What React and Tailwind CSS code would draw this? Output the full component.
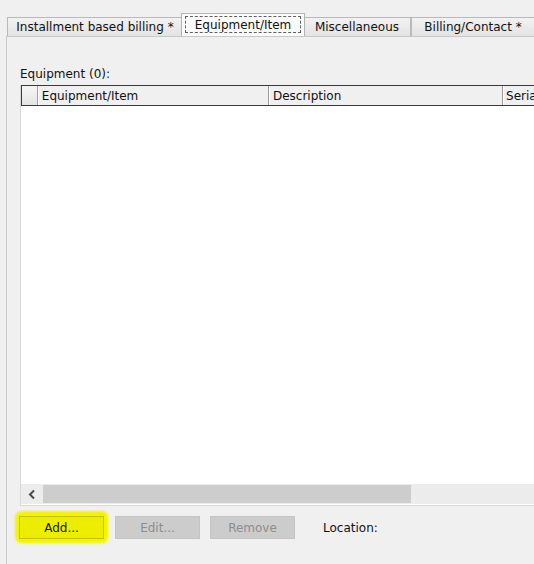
import React from 'react';

const font = { fontFamily: '"DejaVu Sans", "Liberation Sans", sans-serif' };

const tabs = [
  { label: 'Installment based billing *', w: 'w-[176px]' },
  { label: 'Equipment/Item', w: 'w-[124px]', active: true },
  { label: 'Miscellaneous', w: 'w-[108px]' },
  { label: 'Billing/Contact *', w: 'w-[124px]' },
];

const Tab = ({ label, w, active }) => {
  if (active) {
    return (
      <div className={`${w} h-[23px] -mx-[2px] relative z-10 bg-[#fbfbfb] border border-b-0 border-[#b3b3b3] flex items-start justify-center pt-[2px] px-[3px] shrink-0`}>
        <div className="w-full h-[17px] border border-dashed border-[#606060] flex items-center justify-center text-[12px] text-[#111] whitespace-nowrap">
          {label}
        </div>
      </div>
    );
  }
  return (
    <div className={`${w} h-[19px] bg-gradient-to-b from-[#f2f2f2] to-[#e3e3e3] border border-b-0 border-[#b9b9b9] flex items-center justify-center text-[12px] text-[#111] shrink-0 whitespace-nowrap`}>
      {label}
    </div>
  );
};

const Btn = ({ children, disabled, highlight }) => (
  <div className="relative">
    {highlight && (
      <div className="absolute -left-[4px] -right-[4px] -top-[5px] -bottom-[4px] rounded-[6px] bg-[#f4f400] blur-[1px]" />
    )}
    <button
      type="button"
      className={`relative w-[85px] h-[23px] text-[12px] flex items-center justify-center border ${
        highlight
          ? 'bg-[#eded00] border-[#c2c200] text-[#111]'
          : disabled
          ? 'bg-[#cccccc] border-[#c4c4c4] text-[#8d8d8d]'
          : 'bg-[#e1e1e1] border-[#adadad] text-[#111]'
      }`}
      style={font}
    >
      {children}
    </button>
  </div>
);

export default function App() {
  return (
    <div className="w-[534px] h-[564px] bg-[#f0f0f0] overflow-hidden flex flex-col" style={font}>
      {/* tab strip */}
      <div className="h-[36px] flex items-end pl-[7px] shrink-0">
        {tabs.map((t) => (
          <Tab key={t.label} {...t} />
        ))}
      </div>

      {/* tab page */}
      <div className="flex-1 ml-[6px] border-l border-t border-[#c9c9c9] bg-[#f0f0f0] pt-[29px] pl-[13px]">
        <div className="text-[12px] text-[#111] h-[19px] leading-[16px]">Equipment (0):</div>

        {/* list view */}
        <div className="w-[520px] h-[421px] border-l border-b border-[#d8d8d8] bg-white flex flex-col">
          <div className="h-[21px] border-t border-b border-[#3a3a3a] bg-[#f0f0f0] flex text-[12px] text-[#111] shrink-0 whitespace-nowrap">
            <div className="w-[17px] border-l border-[#3a3a3a] border-r border-r-[#a0a0a0] bg-gradient-to-b from-[#f6f6f6] to-[#e4e4e4]" />
            <div className="w-[234px] border-l border-white border-r border-r-[#9a9a9a] pl-[3px] flex items-center">Equipment/Item</div>
            <div className="w-[237px] border-l border-white border-r border-r-[#9a9a9a] pl-[3px] flex items-center">Description</div>
            <div className="flex-1 border-l border-white pl-[2px] flex items-center">Serial</div>
          </div>
          <div className="flex-1 bg-white" />
          {/* horizontal scrollbar */}
          <div className="h-[20px] flex bg-[#ececec] shrink-0 mb-[1px]">
            <div className="w-[22px] flex items-center justify-center">
              <svg width="8" height="11" viewBox="0 0 8 11">
                <path d="M6 1.5 L2 5.5 L6 9.5" fill="none" stroke="#4a4a4a" strokeWidth="2" />
              </svg>
            </div>
            <div className="w-[368px] bg-[#cdcdcd] my-[1px]" />
            <div className="flex-1" />
          </div>
        </div>

        {/* buttons row */}
        <div className="flex items-center mt-[10px] -ml-[1px]">
          <Btn highlight>Add...</Btn>
          <div className="w-[11px]" />
          <Btn disabled>Edit...</Btn>
          <div className="w-[10px]" />
          <Btn disabled>Remove</Btn>
          <div className="ml-[28px] text-[12px] text-[#111]">Location:</div>
        </div>
      </div>
    </div>
  );
}
